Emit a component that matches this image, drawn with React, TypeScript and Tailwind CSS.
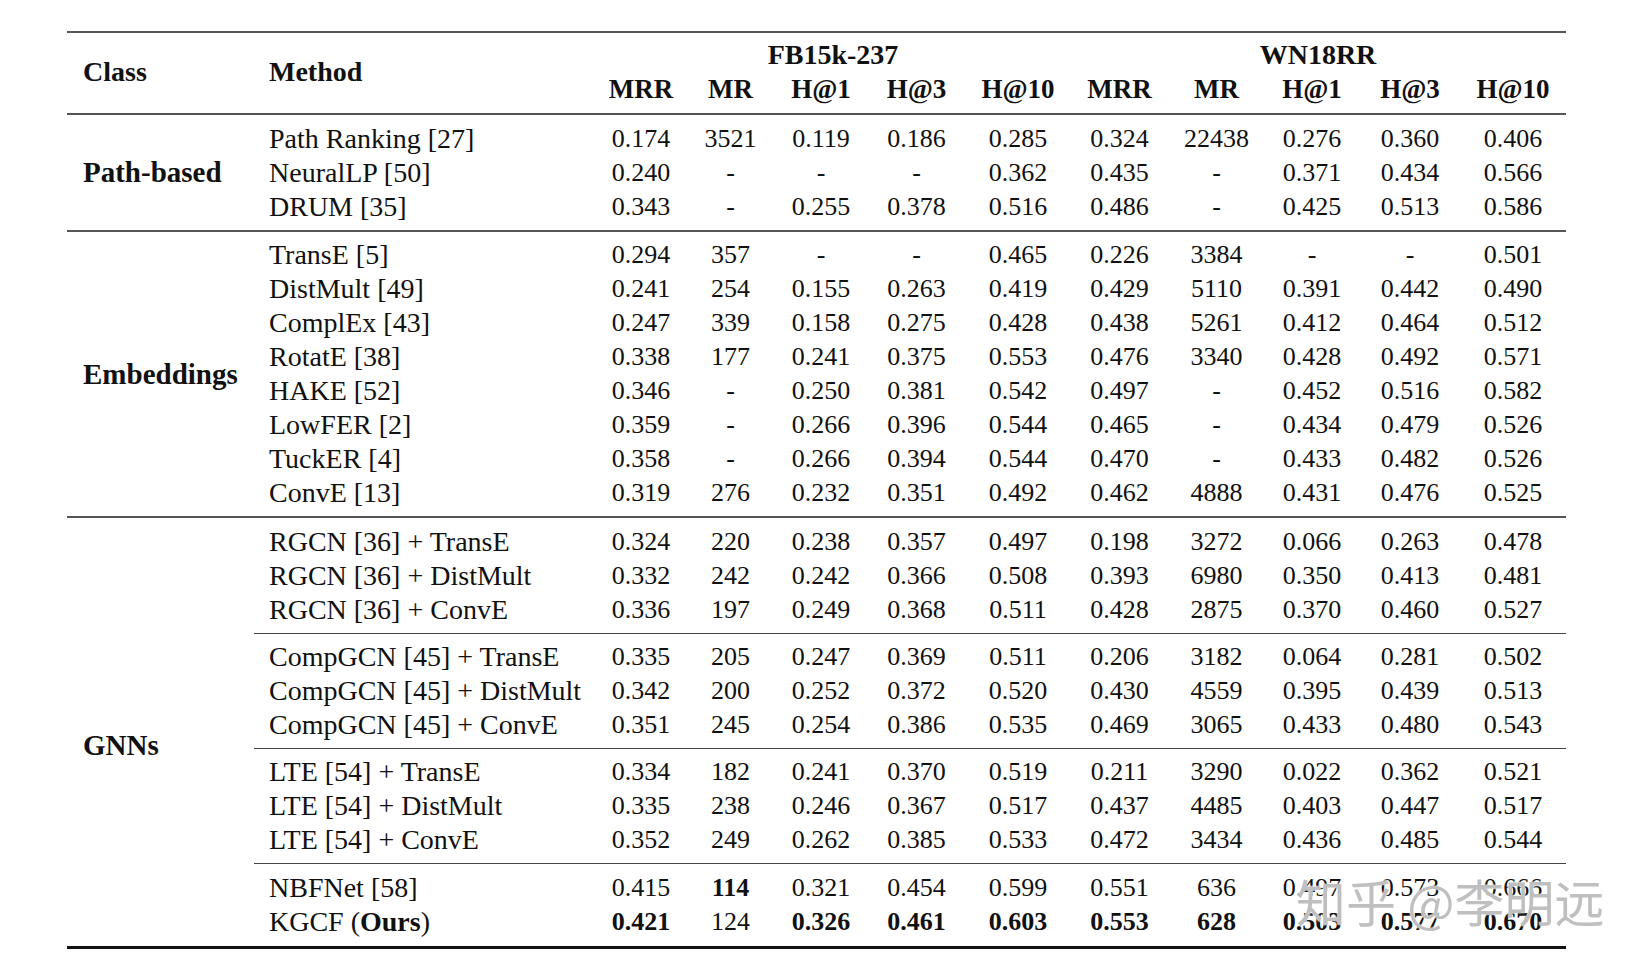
import React from 'react';

type Row = { method: React.ReactNode; vals: string[] };
type Group = Row[];

const r = (method: React.ReactNode, line: string): Row => ({ method, vals: line.split(' ') });

const pathBased: Group = [
  r('Path Ranking [27]', '0.174 3521 0.119 0.186 0.285 0.324 22438 0.276 0.360 0.406'),
  r('NeuralLP [50]', '0.240 - - - 0.362 0.435 - 0.371 0.434 0.566'),
  r('DRUM [35]', '0.343 - 0.255 0.378 0.516 0.486 - 0.425 0.513 0.586'),
];

const embeddings: Group = [
  r('TransE [5]', '0.294 357 - - 0.465 0.226 3384 - - 0.501'),
  r('DistMult [49]', '0.241 254 0.155 0.263 0.419 0.429 5110 0.391 0.442 0.490'),
  r('ComplEx [43]', '0.247 339 0.158 0.275 0.428 0.438 5261 0.412 0.464 0.512'),
  r('RotatE [38]', '0.338 177 0.241 0.375 0.553 0.476 3340 0.428 0.492 0.571'),
  r('HAKE [52]', '0.346 - 0.250 0.381 0.542 0.497 - 0.452 0.516 0.582'),
  r('LowFER [2]', '0.359 - 0.266 0.396 0.544 0.465 - 0.434 0.479 0.526'),
  r('TuckER [4]', '0.358 - 0.266 0.394 0.544 0.470 - 0.433 0.482 0.526'),
  r('ConvE [13]', '0.319 276 0.232 0.351 0.492 0.462 4888 0.431 0.476 0.525'),
];

const gnnGroups: Group[] = [
  [
    r('RGCN [36] + TransE', '0.324 220 0.238 0.357 0.497 0.198 3272 0.066 0.263 0.478'),
    r('RGCN [36] + DistMult', '0.332 242 0.242 0.366 0.508 0.393 6980 0.350 0.413 0.481'),
    r('RGCN [36] + ConvE', '0.336 197 0.249 0.368 0.511 0.428 2875 0.370 0.460 0.527'),
  ],
  [
    r('CompGCN [45] + TransE', '0.335 205 0.247 0.369 0.511 0.206 3182 0.064 0.281 0.502'),
    r('CompGCN [45] + DistMult', '0.342 200 0.252 0.372 0.520 0.430 4559 0.395 0.439 0.513'),
    r('CompGCN [45] + ConvE', '0.351 245 0.254 0.386 0.535 0.469 3065 0.433 0.480 0.543'),
  ],
  [
    r('LTE [54] + TransE', '0.334 182 0.241 0.370 0.519 0.211 3290 0.022 0.362 0.521'),
    r('LTE [54] + DistMult', '0.335 238 0.246 0.367 0.517 0.437 4485 0.403 0.447 0.517'),
    r('LTE [54] + ConvE', '0.352 249 0.262 0.385 0.533 0.472 3434 0.436 0.485 0.544'),
  ],
  [
    r('NBFNet [58]', '0.415 *114 0.321 0.454 0.599 0.551 636 0.497 0.573 0.666'),
    r(
      <>
        KGCF (<span className="font-bold">Ours</span>)
      </>,
      '*0.421 124 *0.326 *0.461 *0.603 *0.553 *628 *0.503 *0.577 *0.670'
    ),
  ],
];

const rowGrid =
  'grid grid-cols-[342px_90px_89px_92px_99px_104px_99px_95px_96px_100px_106px] h-[34px] items-center';

function DataRow({ row }: { row: Row }) {
  return (
    <div className={rowGrid}>
      <div className="pl-[15px] text-[28px] leading-none whitespace-nowrap">{row.method}</div>
      {row.vals.map((v, i) => {
        const bold = v.startsWith('*');
        return (
          <div
            key={i}
            className={`text-center text-[26px] leading-none ${bold ? 'font-bold' : ''}`}
          >
            {bold ? v.slice(1) : v}
          </div>
        );
      })}
    </div>
  );
}

function Rows({ rows, className }: { rows: Group; className: string }) {
  return (
    <div className={className}>
      {rows.map((row, i) => (
        <DataRow key={i} row={row} />
      ))}
    </div>
  );
}

export default function App() {
  const sub = ['MRR', 'MR', 'H@1', 'H@3', 'H@10', 'MRR', 'MR', 'H@1', 'H@3', 'H@10'];

  return (
    <div className="relative w-[1646px] h-[971px] bg-white text-[#111] font-['Liberation_Serif','DejaVu_Serif',serif] overflow-hidden">
      <div className="ml-[67px] w-[1499px] pt-[31px]">
        {/* Header */}
        <div className="border-t-2 border-[#555] border-b-2 border-b-[#555] pt-[4px] pb-[7px]">
          <div className="grid grid-cols-[187px_342px_90px_89px_92px_99px_104px_99px_95px_96px_100px_106px] grid-rows-[35px_34px] items-center font-bold text-[28px] leading-none">
            <div className="row-span-2 pl-[16px]">Class</div>
            <div className="row-span-2 pl-[15px]">Method</div>
            <div className="col-span-5 text-center">FB15k-237</div>
            <div className="col-span-5 text-center">WN18RR</div>
            {sub.map((s, i) => (
              <div key={i} className="text-center text-[27px]">
                {s}
              </div>
            ))}
          </div>
        </div>

        {/* Path-based */}
        <div className="flex border-b-2 border-[#555]">
          <div className="w-[187px] pl-[16px] flex items-center font-bold text-[29px] leading-none">Path-based</div>
          <Rows rows={pathBased} className="pt-[7px] pb-[6px]" />
        </div>

        {/* Embeddings */}
        <div className="flex border-b-2 border-[#555]">
          <div className="w-[187px] pl-[16px] flex items-center font-bold text-[29px] leading-none">Embeddings</div>
          <Rows rows={embeddings} className="pt-[6px] pb-[6px]" />
        </div>

        {/* GNNs */}
        <div className="flex border-b-[3px] border-[#111]">
          <div className="w-[187px] pl-[16px] pt-[210px] font-bold text-[29px] leading-[34px]">GNNs</div>
          <div className="flex flex-col">
            <Rows rows={gnnGroups[0]} className="pt-[7px] pb-[6px] border-b border-[#444]" />
            <Rows rows={gnnGroups[1]} className="pt-[6px] pb-[6px] border-b border-[#444]" />
            <Rows rows={gnnGroups[2]} className="pt-[6px] pb-[6px] border-b border-[#444]" />
            <Rows rows={gnnGroups[3]} className="pt-[7px] pb-[7px]" />
          </div>
        </div>
      </div>

      {/* watermark */}
      <div className="absolute left-[1296px] top-[875px] text-[50px] leading-none whitespace-nowrap text-[#a4a4a4]/70 font-['Noto_Sans_CJK_SC','Noto_Sans',sans-serif] [text-shadow:0_0_2px_#fff,0_0_1px_#fff]">
        知乎 @李明远
      </div>
    </div>
  );
}
